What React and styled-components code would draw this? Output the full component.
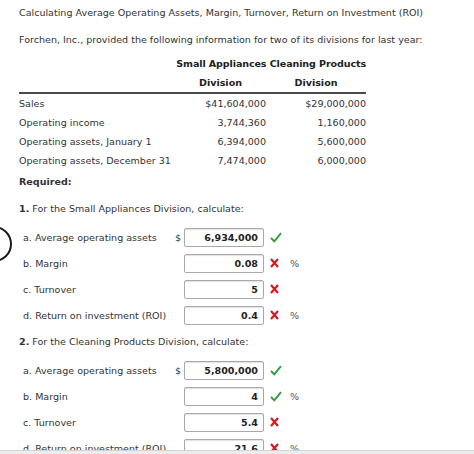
import React from 'react';
import styled, { createGlobalStyle } from 'styled-components';

const GlobalStyle = createGlobalStyle`
  html, body {
    margin: 0;
    padding: 0;
    background: #fff;
    overflow: hidden;
  }
  body {
    font-family: "DejaVu Sans", Verdana, sans-serif;
    font-size: 9.55px;
    color: #333;
  }
`;

const Page = styled.div`
  position: relative;
  width: 474px;
  height: 454px;
  padding: 6px 0 0 19px;
  box-sizing: border-box;
`;

const Line = styled.div`
  line-height: 14px;
  margin-top: ${(p) => p.$top || 0}px;
  font-weight: ${(p) => (p.$bold ? 'bold' : 'normal')};
  white-space: nowrap;
`;

const DataTable = styled.div`
  display: grid;
  grid-template-columns: 156px 91px 100px;
  width: 347px;
  margin-top: 7px;
`;

const HeadCell = styled.div`
  grid-column: ${(p) => p.$span || 'auto'};
  font-weight: bold;
  text-align: ${(p) => (p.$right ? 'right' : 'center')};
  white-space: nowrap;
  line-height: 19px;
  color: #222;
  letter-spacing: ${(p) => (p.$right ? '-0.1px' : '0')};
`;

const Rule = styled.div`
  grid-column: 1 / -1;
  height: 2px;
  background: #4a4a4a;
`;

const Cell = styled.div`
  line-height: 19px;
  text-align: ${(p) => (p.$right ? 'right' : 'left')};
  white-space: nowrap;
`;

const Bold = styled.span`
  font-weight: bold;
`;

const Answers = styled.div`
  display: flex;
  flex-direction: column;
  padding-left: 4px;
  margin-top: 8px;
`;

const AnswerRow = styled.div`
  display: grid;
  grid-template-columns: 149px 12px 80px 18px 20px;
  align-items: center;
  height: 26px;
`;

const Currency = styled.span`
  text-align: left;
  padding-left: 3px;
`;

const Field = styled.div`
  height: 19px;
  box-sizing: border-box;
  border: 1px solid #a9a9a9;
  border-radius: 2px;
  box-shadow: inset 0 1px 1px rgba(0, 0, 0, 0.12);
  display: flex;
  align-items: center;
  justify-content: flex-end;
  padding-right: 5px;
  font-weight: bold;
  color: #222;
`;

const Mark = styled.span`
  display: flex;
  align-items: center;
  padding-left: 6px;
`;

const Percent = styled.span`
  color: #555;
  padding-left: 8px;
`;

const Ring = styled.div`
  position: absolute;
  left: -24px;
  top: 226px;
  width: 36px;
  height: 36px;
  border: 2px solid #1a1a1a;
  border-radius: 50%;
  box-sizing: border-box;
`;

const BottomBar = styled.div`
  position: absolute;
  left: 0;
  right: 0;
  bottom: 0;
  height: 3px;
  background: #ececec;
  border-top: 1px solid #d4d4d4;
`;

const Check = () => (
  <svg width="12" height="11" viewBox="0 0 12 11">
    <path d="M1 6 L4.3 9.3 L11 1.2" fill="none" stroke="#2e9d3f" strokeWidth="1.9" />
  </svg>
);

const Cross = () => (
  <svg width="9" height="10" viewBox="0 0 9 10">
    <path d="M1 1 L8 9 M8 1 L1 9" fill="none" stroke="#d71920" strokeWidth="2.2" />
  </svg>
);

const rows = [
  ['Sales', '$41,604,000', '$29,000,000'],
  ['Operating income', '3,744,360', '1,160,000'],
  ['Operating assets, January 1', '6,394,000', '5,600,000'],
  ['Operating assets, December 31', '7,474,000', '6,000,000'],
];

const partOne = [
  { label: 'a. Average operating assets', cur: true, value: '6,934,000', ok: true },
  { label: 'b. Margin', value: '0.08', ok: false, pct: true },
  { label: 'c. Turnover', value: '5', ok: false },
  { label: 'd. Return on investment (ROI)', value: '0.4', ok: false, pct: true },
];

const partTwo = [
  { label: 'a. Average operating assets', cur: true, value: '5,800,000', ok: true },
  { label: 'b. Margin', value: '4', ok: true, pct: true },
  { label: 'c. Turnover', value: '5.4', ok: false },
  { label: 'd. Return on investment (ROI)', value: '21.6', ok: false, pct: true },
];

const AnswerList = ({ items }) => (
  <Answers>
    {items.map((it) => (
      <AnswerRow key={it.label}>
        <span>{it.label}</span>
        <Currency>{it.cur ? '$' : ''}</Currency>
        <Field>{it.value}</Field>
        <Mark>{it.ok ? <Check /> : <Cross />}</Mark>
        <Percent>{it.pct ? '%' : ''}</Percent>
      </AnswerRow>
    ))}
  </Answers>
);

const App = () => {
  return (
    <>
      <GlobalStyle />
      <Page>
        <Line>Calculating Average Operating Assets, Margin, Turnover, Return on Investment (ROI)</Line>
        <Line $top={13}>Forchen, Inc., provided the following information for two of its divisions for last year:</Line>
        <DataTable>
          <div />
          <HeadCell $span="2 / 4" $right>Small Appliances Cleaning Products</HeadCell>
          <div />
          <HeadCell>Division</HeadCell>
          <HeadCell>Division</HeadCell>
          <Rule />
          {rows.map((r) => (
            <React.Fragment key={r[0]}>
              <Cell>{r[0]}</Cell>
              <Cell $right>{r[1]}</Cell>
              <Cell $right>{r[2]}</Cell>
            </React.Fragment>
          ))}
        </DataTable>
        <Line $bold $top={5}>Required:</Line>
        <Line $top={13}>
          <Bold>1.</Bold> For the Small Appliances Division, calculate:
        </Line>
        <AnswerList items={partOne} />
        <Line $top={7}>
          <Bold>2.</Bold> For the Cleaning Products Division, calculate:
        </Line>
        <AnswerList items={partTwo} />
        <Ring />
        <BottomBar />
      </Page>
    </>
  );
};

export default App;
